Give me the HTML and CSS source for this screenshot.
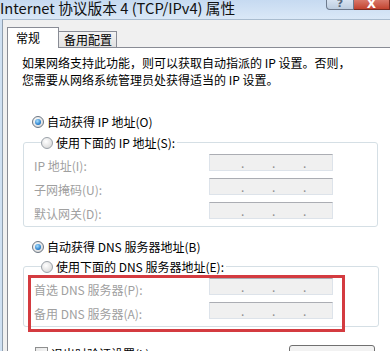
FILE: index.html
```html
<!DOCTYPE html>
<html lang="zh-CN">
<head>
<meta charset="utf-8">
<title>Internet 协议版本 4 (TCP/IPv4) 属性</title>
<link rel="stylesheet" href="styles.css">
</head>
<body>
<div class="window">
  <div class="titlebar">
    <span class="title">Internet 协议版本 4 (TCP/IPv4) 属性</span>
    <div class="caption-btns">
      <div class="cbtn help"><span>?</span></div>
      <div class="cbtn close"><span>X</span></div>
    </div>
  </div>
  <div class="client">
    <div class="tabs">
      <div class="tab active">常规</div>
      <div class="tab">备用配置</div>
    </div>
    <div class="panel">
      <p class="intro">如果网络支持此功能，则可以获取自动指派的 IP 设置。否则，<br>您需要从网络系统管理员处获得适当的 IP 设置。</p>

      <div class="radio-row first"><span class="radio checked"></span><span>自动获得 IP 地址(O)</span></div>
      <fieldset class="group g1">
        <legend><span class="radio"></span><span>使用下面的 IP 地址(S):</span></legend>
        <div class="rows">
          <span class="lbl">IP 地址(I):</span><span class="ipbox"><i>.</i><i>.</i><i>.</i></span>
          <span class="lbl">子网掩码(U):</span><span class="ipbox"><i>.</i><i>.</i><i>.</i></span>
          <span class="lbl">默认网关(D):</span><span class="ipbox"><i>.</i><i>.</i><i>.</i></span>
        </div>
      </fieldset>

      <div class="radio-row second"><span class="radio checked"></span><span>自动获得 DNS 服务器地址(B)</span></div>
      <fieldset class="group g2">
        <legend><span class="radio"></span><span>使用下面的 DNS 服务器地址(E):</span></legend>
        <div class="rows">
          <span class="lbl">首选 DNS 服务器(P):</span><span class="ipbox"><i>.</i><i>.</i><i>.</i></span>
          <span class="lbl">备用 DNS 服务器(A):</span><span class="ipbox"><i>.</i><i>.</i><i>.</i></span>
        </div>
      </fieldset>

      <div class="bottom">
        <label class="check-row"><span class="checkbox"></span><span>退出时验证设置(L)</span></label>
        <button class="btn">高级(V)...</button>
      </div>
    </div>
  </div>
  <div class="highlight"></div>
</div>
</body>
</html>
```

FILE: styles.css
```css
* { box-sizing: border-box; }
html, body {
  margin: 0;
  padding: 0;
  width: 390px;
  height: 351px;
  overflow: hidden;
  background: #f0f0f0;
}
body {
  font-family: "Noto Sans CJK SC", "Liberation Sans", sans-serif;
  font-size: 12px;
  color: #000;
}
.window {
  position: relative;
  width: 390px;
  height: 351px;
  background: #cfe0f2;
  display: flex;
  flex-direction: column;
  overflow: hidden;
}
.titlebar {
  height: 19px;
  flex: none;
  display: flex;
  align-items: flex-start;
  background: linear-gradient(#c6daf1, #dae8f7);
}
.title {
  font-size: 14.7px;
  line-height: 16px;
  margin-top: 0;
  white-space: nowrap;
  color: #111;
}
.caption-btns {
  margin-left: auto;
  display: flex;
}
.cbtn {
  height: 10px;
  overflow: hidden;
  display: flex;
  justify-content: center;
  align-items: flex-end;
  font-family: "DejaVu Sans", sans-serif;
  font-weight: bold;
}
.cbtn span {
  line-height: 12px;
  margin-bottom: -1px;
}
.help {
  width: 28px;
  border: 1px solid #6d7a8d;
  border-top: none;
  border-radius: 0 0 0 4px;
  background: linear-gradient(#d7e3f1, #bdcde0);
  color: #54657a;
  font-size: 11px;
}
.close {
  width: 36px;
  border: 1px solid #7a2a20;
  border-top: none;
  border-left: none;
  background: linear-gradient(#d9786a, #c2432f);
  color: #fff;
  font-size: 12px;
}
.client {
  flex: 1;
  margin-left: 2px;
  border-left: 1px solid #8f9eae;
  border-top: 1px solid #a9bccf;
  background: #f0f0f0;
  padding: 7px 0 0 4px;
  display: flex;
  flex-direction: column;
}
.tabs {
  display: flex;
  align-items: flex-end;
  height: 20px;
  flex: none;
}
.tab {
  height: 16px;
  padding: 0 5px;
  width: 58px;
  border: 1px solid #898c95;
  border-bottom: none;
  border-left: none;
  background: linear-gradient(#f3f3f3, #e1e1e1);
  line-height: 15px;
  font-size: 12px;
  white-space: nowrap;
}
.tab.active {
  width: 52px;
  height: 21px;
  margin-bottom: -1px;
  border-left: 1px solid #898c95;
  background: #fff;
  padding-left: 8px;
  line-height: 20px;
  position: relative;
  z-index: 1;
}
.panel {
  width: 400px;
  flex: none;
  background: #fff;
  border: 1px solid #898c95;
  padding: 6px 0 0 14px;
}
.intro {
  margin: 0;
  line-height: 17px;
  white-space: nowrap;
}
.radio-row, legend {
  display: flex;
  align-items: center;
  height: 17px;
  line-height: 17px;
  gap: 3px;
  white-space: nowrap;
}
.radio-row { margin-left: 10px; }
.radio-row.first { margin-top: 25px; }
.radio-row.second { margin-top: 11px; }
legend {
  padding: 0 2px 0 0;
  margin-left: 7px;
  background: #fff;
}
.radio {
  width: 12px;
  height: 12px;
  border-radius: 50%;
  border: 1px solid #9aa1a8;
  background: radial-gradient(circle at 40% 35%, #ffffff, #dcdcdc 75%);
  display: inline-flex;
  align-items: center;
  justify-content: center;
  flex: none;
}
.radio.checked {
  border-color: #6b7683;
}
.radio.checked::after {
  content: "";
  width: 6px;
  height: 6px;
  border-radius: 50%;
  background: radial-gradient(circle at 40% 35%, #a9e0ff, #1f77c8 70%, #0f4f95);
}
.group {
  margin: 0 0 0 1px;
  padding: 0 0 7px 10px;
  border: 1px solid #d5dfe5;
  border-radius: 3px;
  min-width: 0;
}
.g1 { width: 355px; margin-top: 4px; }
.g2 { width: 356px; margin-top: 3px; }
.rows {
  display: grid;
  grid-template-columns: 175px 124px;
  grid-auto-rows: 17px;
  row-gap: 7px;
  margin-top: 3px;
  align-items: start;
}
.lbl {
  color: #a0a0a0;
  height: 17px;
  line-height: 17px;
  padding-top: 3px;
  white-space: nowrap;
}
.ipbox {
  height: 17px;
  border: 1px solid #dde3ea;
  border-top-color: #abadb3;
  background: #f0f0f0;
  display: flex;
  align-items: flex-end;
  padding-left: 31px;
  gap: 28px;
  color: #8d8d8d;
  font-size: 12px;
  line-height: 14px;
}
.ipbox i {
  font-style: normal;
  width: 3px;
}
.bottom {
  display: flex;
  align-items: flex-start;
  margin-top: 18px;
  padding-left: 13px;
}
.check-row {
  display: flex;
  align-items: center;
  gap: 3px;
  line-height: 17px;
}
.checkbox {
  width: 13px;
  height: 13px;
  border: 1px solid #8e8f8f;
  background: linear-gradient(135deg, #e6e6e6, #fdfdfd);
}
.btn {
  margin-left: 139px;
  width: 86px;
  height: 23px;
  border: 1px solid #707070;
  border-radius: 3px;
  background: linear-gradient(#f2f2f2 50%, #dddddd 50%);
  font-family: "Noto Sans CJK SC", sans-serif;
  font-size: 12px;
  padding: 0;
  color: #000;
}
.highlight {
  position: absolute;
  left: 28px;
  top: 275px;
  width: 317px;
  height: 57px;
  border: 3px solid #d43b40;
}
```
